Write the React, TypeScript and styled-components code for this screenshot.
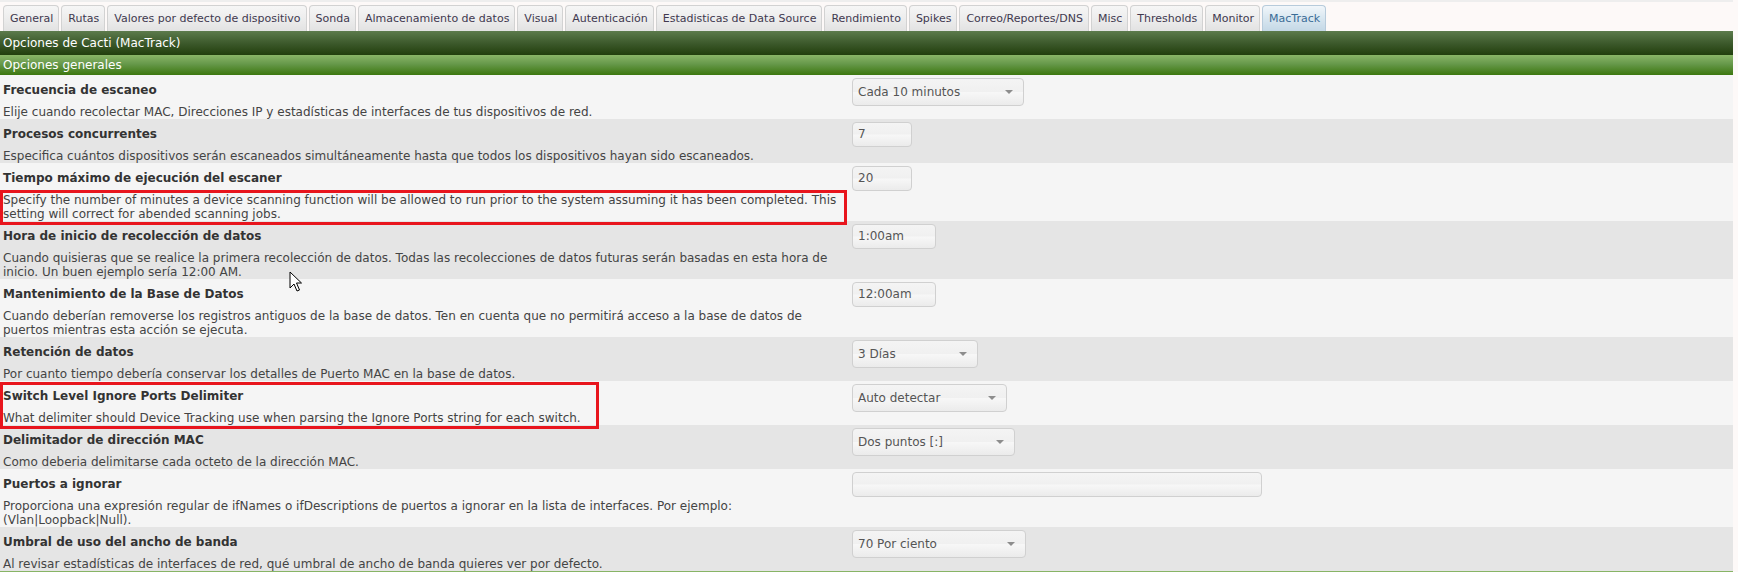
import React, { ReactElement } from 'react';
import styled, { createGlobalStyle } from 'styled-components';

interface Field {
  title: string;
  description: string;
  control: 'select' | 'text';
  value?: string;
  width: number;
}
interface RowProps {
  field: Field;
  alt: boolean;
}
interface TabProps {
  active?: boolean;
}
interface WidthProps {
  w: number;
}
interface BoxProps {
  top: number;
  width: number;
  height: number;
}

const tabs = [
  'General', 'Rutas', 'Valores por defecto de dispositivo', 'Sonda', 'Almacenamiento de datos', 'Visual',
  'Autenticación', 'Estadisticas de Data Source', 'Rendimiento', 'Spikes', 'Correo/Reportes/DNS', 'Misc',
  'Thresholds', 'Monitor', 'MacTrack',
];

const fields: Field[] = [
  {
    title: 'Frecuencia de escaneo',
    description: 'Elije cuando recolectar MAC, Direcciones IP y estadísticas de interfaces de tus dispositivos de red.',
    control: 'select', value: 'Cada 10 minutos', width: 172,
  },
  {
    title: 'Procesos concurrentes',
    description: 'Especifica cuántos dispositivos serán escaneados simultáneamente hasta que todos los dispositivos hayan sido escaneados.',
    control: 'text', value: '7', width: 60,
  },
  {
    title: 'Tiempo máximo de ejecución del escaner',
    description: 'Specify the number of minutes a device scanning function will be allowed to run prior to the system assuming it has been completed. This setting will correct for abended scanning jobs.',
    control: 'text', value: '20', width: 60,
  },
  {
    title: 'Hora de inicio de recolección de datos',
    description: 'Cuando quisieras que se realice la primera recolección de datos. Todas las recolecciones de datos futuras serán basadas en esta hora de inicio. Un buen ejemplo sería 12:00 AM.',
    control: 'text', value: '1:00am', width: 84,
  },
  {
    title: 'Mantenimiento de la Base de Datos',
    description: 'Cuando deberían removerse los registros antiguos de la base de datos. Ten en cuenta que no permitirá acceso a la base de datos de puertos mientras esta acción se ejecuta.',
    control: 'text', value: '12:00am', width: 84,
  },
  {
    title: 'Retención de datos',
    description: 'Por cuanto tiempo debería conservar los detalles de Puerto MAC en la base de datos.',
    control: 'select', value: '3 Días', width: 126,
  },
  {
    title: 'Switch Level Ignore Ports Delimiter',
    description: 'What delimiter should Device Tracking use when parsing the Ignore Ports string for each switch.',
    control: 'select', value: 'Auto detectar', width: 155,
  },
  {
    title: 'Delimitador de dirección MAC',
    description: 'Como deberia delimitarse cada octeto de la dirección MAC.',
    control: 'select', value: 'Dos puntos [:]', width: 163,
  },
  {
    title: 'Puertos a ignorar',
    description: 'Proporciona una expresión regular de ifNames o ifDescriptions de puertos a ignorar en la lista de interfaces. Por ejemplo: (Vlan|Loopback|Null).',
    control: 'text', value: '', width: 410,
  },
  {
    title: 'Umbral de uso del ancho de banda',
    description: 'Al revisar estadísticas de interfaces de red, qué umbral de ancho de banda quieres ver por defecto.',
    control: 'select', value: '70 Por ciento', width: 174,
  },
];

const GlobalStyle = createGlobalStyle`
  html, body {
    margin: 0;
    padding: 0;
    background: #fdf9f8;
    overflow: hidden;
  }
  body {
    font-family: "DejaVu Sans", Verdana, sans-serif;
    font-size: 12px;
    color: #333;
  }
`;

const Page = styled.div`
  border-top: 2px solid #eeeeee;
  position: relative;
  width: 1733px;
`;
const TabBar = styled.div`
  display: flex;
  gap: 2px;
  padding: 3px 0 0 3px;
  height: 26px;
`;
const Tab = styled.div<TabProps>`
  display: flex;
  align-items: center;
  height: 26px;
  box-sizing: border-box;
  padding: 0 5px 1px 6px;
  border: 1px solid ${p => p.active ? '#b7cbdb' : '#d2d2d2'};
  border-bottom: none;
  border-radius: 4px 4px 0 0;
  background: ${p => p.active
    ? 'linear-gradient(#f1f6fa 0%, #dbe8f1 45%, #c4d8e6 100%)'
    : 'linear-gradient(#f6f6f6 0%, #ececec 55%, #e2e2e2 100%)'};
  color: ${p => p.active ? '#3a6c96' : '#41394f'};
  font-size: 11px;
  white-space: nowrap;
`;
const HeaderBar = styled.div`
  height: 24px;
  line-height: 24px;
  padding-left: 3px;
  color: #fff;
  background: linear-gradient(#5c7b4c 0%, #3d5a2c 50%, #223f0d 100%);
`;
const SectionBar = styled.div`
  height: 20px;
  line-height: 20px;
  padding-left: 3px;
  color: #fff;
  background: linear-gradient(#8ab668 0%, #66984a 45%, #3c770f 100%);
`;
const FormRow = styled.div<{ alt: boolean }>`
  display: grid;
  grid-template-columns: 852px 1fr;
  background: ${p => p.alt ? '#e5e5e5' : '#f5f5f5'};
`;
const LabelCell = styled.div`
  padding: 8px 13px 0 3px;
`;
const Title = styled.div`
  font-weight: bold;
  line-height: 14px;
  margin-bottom: 8px;
  color: #333;
`;
const Description = styled.div`
  line-height: 14px;
  color: #444;
`;
const ControlCell = styled.div`
  padding-top: 3px;
`;
const controlLook = `
  box-sizing: border-box;
  border: 1px solid #d0d0d0;
  border-radius: 4px;
  background: linear-gradient(#f4f4f4 0%, #f0f0f0 48%, #f7f7f7 52%, #ebebeb 100%);
  color: #555;
  font-size: 12px;
  padding: 0 5px;
`;
const Select = styled.div<WidthProps>`
  ${controlLook}
  width: ${p => p.w}px;
  height: 28px;
  display: flex;
  align-items: center;
  justify-content: space-between;
  padding-right: 10px;
`;
const Arrow = styled.span`
  width: 0;
  height: 0;
  border-left: 4px solid transparent;
  border-right: 4px solid transparent;
  border-top: 4px solid #8d8d8d;
`;
const TextInput = styled.div<WidthProps>`
  ${controlLook}
  width: ${p => p.w}px;
  height: 25px;
  line-height: 23px;
`;
const Highlight = styled.div<BoxProps>`
  position: absolute;
  left: 0;
  top: ${p => p.top}px;
  width: ${p => p.width}px;
  height: ${p => p.height}px;
  box-sizing: border-box;
  border: 3px solid #e8151d;
  pointer-events: none;
`;
const Cursor = styled.svg`
  position: absolute;
  left: 289px;
  top: 269px;
`;

function Row({ field, alt }: RowProps): ReactElement {
  return (
    <FormRow alt={alt}>
      <LabelCell>
        <Title>{field.title}</Title>
        <Description>{field.description}</Description>
      </LabelCell>
      <ControlCell>
        {field.control === 'select'
          ? <Select w={field.width}><span>{field.value}</span><Arrow /></Select>
          : <TextInput w={field.width}>{field.value}</TextInput>}
      </ControlCell>
    </FormRow>
  );
}

export default function App(): ReactElement {
  return (
    <Page>
      <GlobalStyle />
      <TabBar>
        {tabs.map(t => <Tab key={t} active={t === 'MacTrack'}>{t}</Tab>)}
      </TabBar>
      <HeaderBar>Opciones de Cacti (MacTrack)</HeaderBar>
      <SectionBar>Opciones generales</SectionBar>
      {fields.map((f, i) => <Row key={f.title} field={f} alt={i % 2 === 1} />)}
      <SectionBar />

      <Highlight top={188} width={847} height={35} />
      <Highlight top={380} width={599} height={47} />
      <Cursor width="14" height="22" viewBox="0 0 14 22">
        <path d="M1 1 L1 17 L5 13 L8 20 L10.5 19 L7.5 12 L12.5 12 Z" fill="#fff" stroke="#000" strokeWidth="1" strokeLinejoin="round" />
      </Cursor>
    </Page>
  );
}
